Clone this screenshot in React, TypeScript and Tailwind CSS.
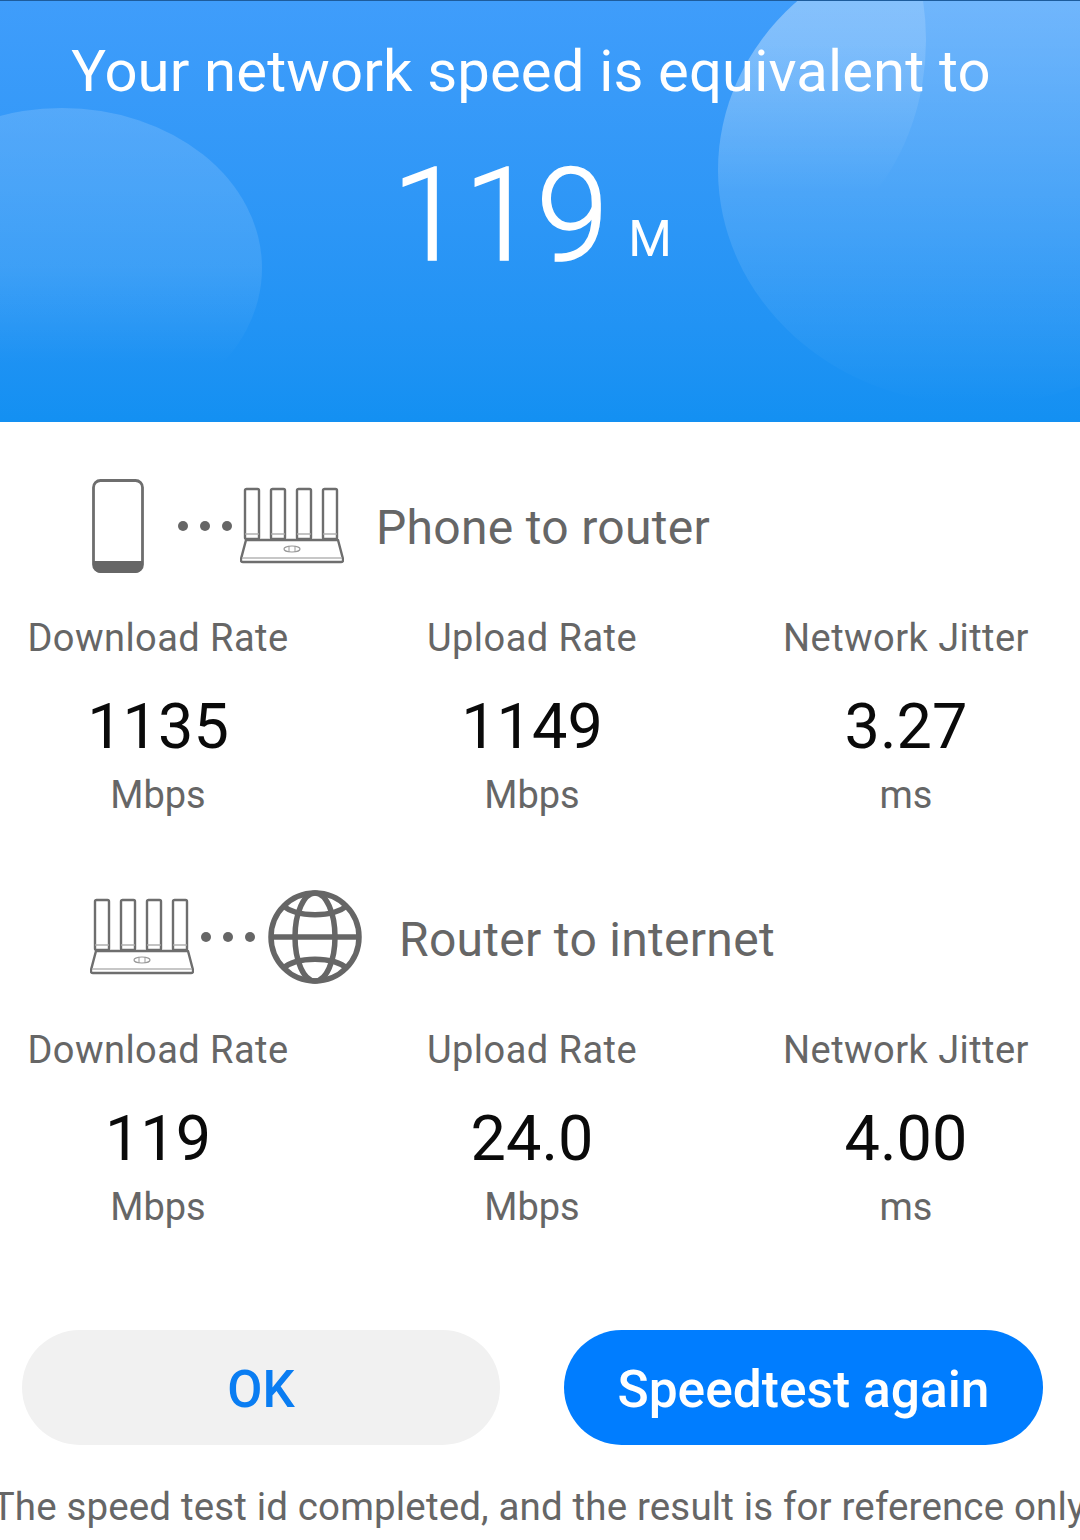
import React from "react";

const G = "#6e6e6e";

function Router() {
  return (
    <svg width="104" height="78" viewBox="0 0 104 78" fill="none" stroke={G} strokeWidth="2.4" strokeLinejoin="round">
      {[5, 31, 57, 83].map((x) => (
        <g key={x}>
          <rect x={x} y="2" width="14" height="50" rx="1.5" />
          <line x1={x} y1="47" x2={x + 14} y2="47" strokeWidth="1.4" stroke="#aaa" />
        </g>
      ))}
      <path d="M6 53H98L103 72Q103.5 75 101 75H3Q0.500 75 1 72Z" />
      <line x1="2" y1="71" x2="102" y2="71" stroke="#b5b5b5" strokeWidth="1.6" />
      <ellipse cx="52" cy="62" rx="8" ry="3" strokeWidth="1.2" stroke="#999" />
      <line x1="49" y1="59" x2="49" y2="65" strokeWidth="1" stroke="#999" />
      <line x1="55" y1="59" x2="55" y2="65" strokeWidth="1" stroke="#999" />
    </svg>
  );
}

function Dots() {
  return (
    <div className="flex items-center gap-[12px]">
      <span className="w-[10px] h-[10px] rounded-full bg-[#666]" />
      <span className="w-[10px] h-[10px] rounded-full bg-[#666]" />
      <span className="w-[10px] h-[10px] rounded-full bg-[#666]" />
    </div>
  );
}

function Phone() {
  return (
    <svg width="52" height="94" viewBox="0 0 52 94" fill="none">
      <rect x="1.500" y="1.500" width="49" height="91" rx="7" stroke={G} strokeWidth="2.8" />
      <path d="M1 82H51V86A8 8 0 0 1 43 94H9A8 8 0 0 1 1 86Z" fill="#666" />
    </svg>
  );
}

function Globe() {
  return (
    <svg width="96" height="96" viewBox="0 0 96 96" fill="none" stroke="#666" strokeWidth="5.5">
      <circle cx="48" cy="48" r="44" />
      <line x1="4" y1="48" x2="92" y2="48" />
      <ellipse cx="48" cy="48" rx="20" ry="44" />
      <path d="M15 16C30 29 66 29 81 16" />
      <path d="M15 80C30 67 66 67 81 80" />
    </svg>
  );
}

function Stat({ label, value, unit }: { label: string; value: string; unit: string }) {
  return (
    <div className="flex flex-col items-center">
      <div className="text-[38px] leading-[44px] tracking-[0.45px] text-[#666]">{label}</div>
      <div className="mt-[31px] text-[63px] leading-[72px] text-[#0a0a0a]">{value}</div>
      <div className="mt-[10px] text-[38px] leading-[44px] text-[#666]">{unit}</div>
    </div>
  );
}

function Stats({ items }: { items: [string, string][] }) {
  const labels = ["Download Rate", "Upload Rate", "Network Jitter"];
  return (
    <div className="grid grid-cols-[316px_432px_316px]">
      {items.map(([v, u], i) => (
        <Stat key={i} label={labels[i]} value={v} unit={u} />
      ))}
    </div>
  );
}

export default function App() {
  return (
    <div className="w-[1080px] h-[1540px] overflow-hidden bg-white font-['Roboto',sans-serif] flex flex-col">
      <div className="relative h-[422px] shrink-0 overflow-hidden border-t border-[#1d5c9c] bg-gradient-to-b from-[#3f9dfb] to-[#1390f2]">
        <div className="absolute left-[-138px] top-[107px] w-[400px] h-[320px] rounded-[50%] bg-gradient-to-b from-white/15 via-white/10 via-50% to-transparent to-80%" />
        <div className="absolute left-[718px] top-[-66px] w-[520px] h-[470px] rounded-[50%] overflow-hidden bg-gradient-to-b from-white/30 via-white/15 via-50% to-transparent">
          <div className="absolute left-[-158px] top-[-115px] w-[366px] h-[440px] rounded-[50%] bg-gradient-to-b from-white/15 via-white/15 via-50% to-transparent to-85%" />
        </div>
        <div className="relative flex flex-col items-center">
          <div className="mt-[37px] mr-[18px] text-[58px] leading-[66px] tracking-[0.15px] text-white">Your network speed is equivalent to</div>
          <div className="mt-[37px] ml-[-16px] flex items-end text-white">
            <span className="text-[130px] leading-[150px] font-light [-webkit-text-stroke:1.5px_white]">119</span>
            <span className="ml-[20px] mb-[22px] text-[50px] leading-[60px] font-normal">M</span>
          </div>
        </div>
      </div>

      <div className="mt-[56px] pl-[92px] flex items-center h-[96px]">
        <Phone />
        <div className="ml-[34px]"><Dots /></div>
        <div className="ml-[8px]"><Router /></div>
        <div className="ml-[32px] mt-[4px] text-[48px] leading-[56px] tracking-[0.3px] text-[#666]">Phone to router</div>
      </div>
      <div className="mt-[42px]">
        <Stats items={[["1135", "Mbps"], ["1149", "Mbps"], ["3.27", "ms"]]} />
      </div>

      <div className="mt-[72px] pl-[90px] flex items-center h-[96px]">
        <Router />
        <div className="ml-[7px]"><Dots /></div>
        <div className="ml-[12px]"><Globe /></div>
        <div className="ml-[36px] mt-[6px] text-[48px] leading-[56px] tracking-[0.3px] text-[#666]">Router to internet</div>
      </div>
      <div className="mt-[43px]">
        <Stats items={[["119", "Mbps"], ["24.0", "Mbps"], ["4.00", "ms"]]} />
      </div>

      <div className="mt-[101px] pl-[22px] flex gap-[64px]">
        <button className="w-[478px] h-[115px] pt-[6px] rounded-full bg-[#f1f1f1] text-[#0a7df2] text-[51px] font-medium">OK</button>
        <button className="w-[479px] h-[115px] pt-[5px] rounded-full bg-[#007dff] text-white text-[51.5px] font-medium">Speedtest again</button>
      </div>
      <div className="mt-[38px] w-full flex justify-center whitespace-nowrap text-[38.5px] leading-[48px] tracking-[0.15px] text-[#666]">
        <span className="shrink-0 ml-[-3px]">The speed test id completed, and the result is for reference only</span>
      </div>
    </div>
  );
}
